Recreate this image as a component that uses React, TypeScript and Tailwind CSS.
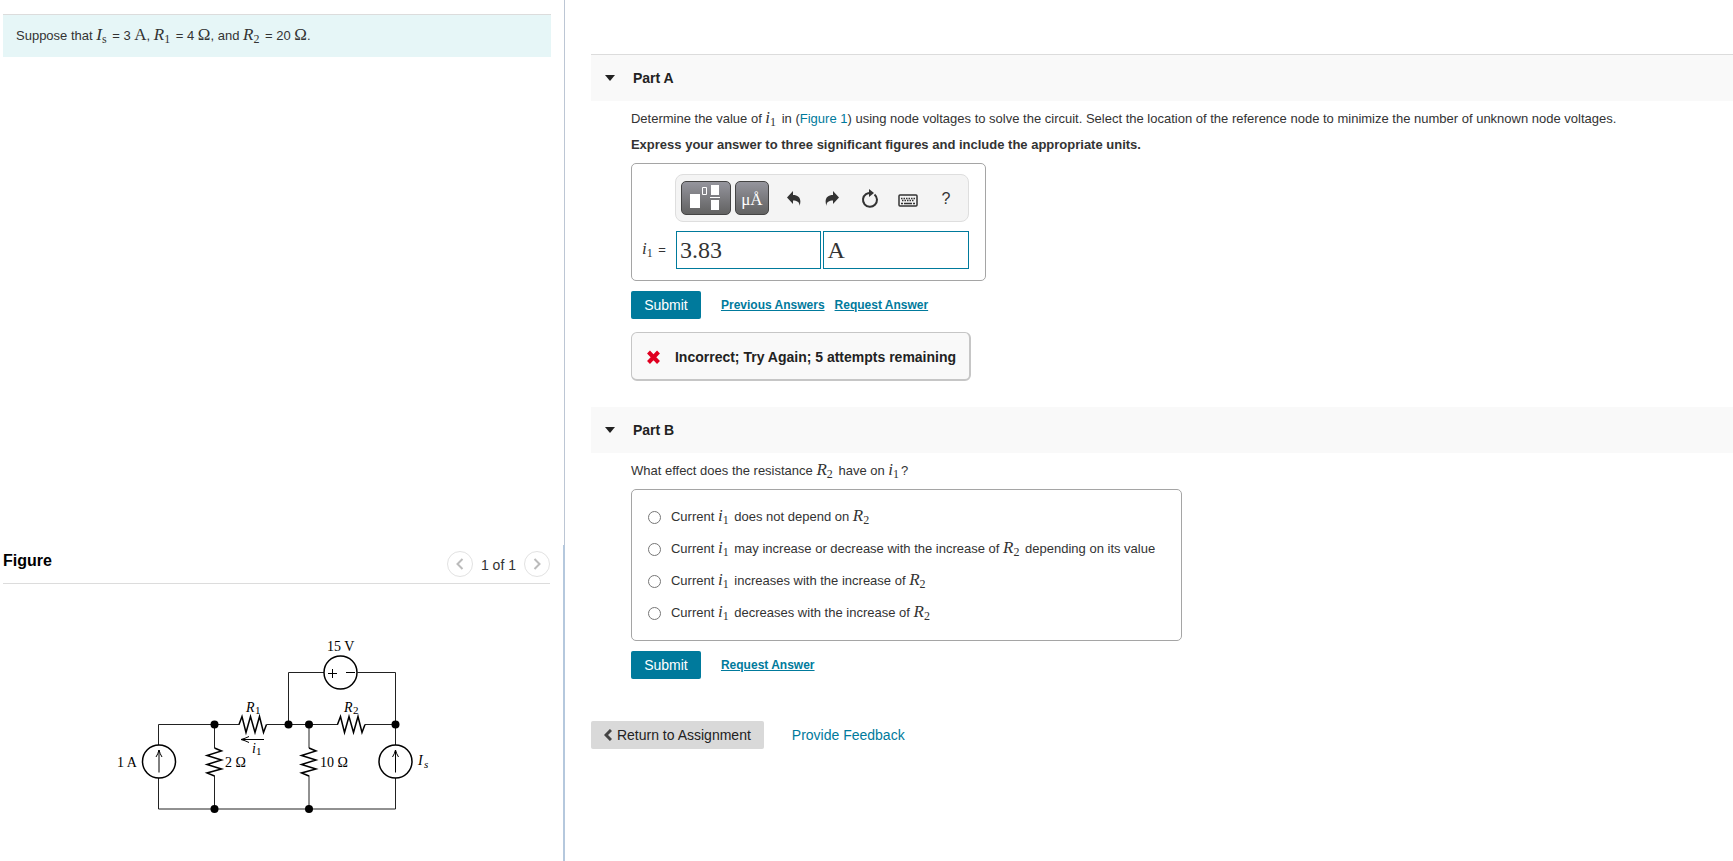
import { useState, type ReactNode } from "react";

const CHOICES: { id: string; text: ReactNode }[] = [
  {
    id: "none",
    text: (
      <>
        Current <Sym name="i" sub="1" /> does not depend on <Sym name="R" sub="2" />
      </>
    ),
  },
  {
    id: "either",
    text: (
      <>
        Current <Sym name="i" sub="1" /> may increase or decrease with the increase of{" "}
        <Sym name="R" sub="2" /> depending on its value
      </>
    ),
  },
  {
    id: "increases",
    text: (
      <>
        Current <Sym name="i" sub="1" /> increases with the increase of <Sym name="R" sub="2" />
      </>
    ),
  },
  {
    id: "decreases",
    text: (
      <>
        Current <Sym name="i" sub="1" /> decreases with the increase of <Sym name="R" sub="2" />
      </>
    ),
  },
];

function Sym({ name, sub }: { name: string; sub: string }) {
  return (
    <span className="mr-0.5 font-['Liberation_Serif',serif] text-[17px] leading-none">
      <i>{name}</i>
      <span className="relative top-[3px] text-xs leading-none">{sub}</span>
    </span>
  );
}

function Unit({ children }: { children: ReactNode }) {
  return (
    <span className="font-['Liberation_Serif',serif] text-[17px] leading-none">{children}</span>
  );
}

function PartHeader({ title, first }: { title: string; first?: boolean }) {
  return (
    <div
      className={
        first
          ? "flex h-[47px] items-center border-t border-[#dcdcdc] bg-[#f9f9f9] pl-3.5"
          : "flex h-[46px] items-center bg-[#f9f9f9] pl-3.5"
      }
    >
      <button type="button" className="flex items-center gap-[18px]">
        <svg width="10" height="6" viewBox="0 0 10 6" aria-hidden="true">
          <path d="M0 0h10L5 6z" fill="#222" />
        </svg>
        <span className="text-sm font-bold text-[#222]">{title}</span>
      </button>
    </div>
  );
}

function SubmitButton() {
  return (
    <button type="button" className="h-7 w-[70px] rounded-xs bg-[#007a9c] text-sm text-white">
      Submit
    </button>
  );
}

function TextLink({ children }: { children: ReactNode }) {
  return (
    <a href="#" className="text-xs font-bold text-[#007a9c] underline">
      {children}
    </a>
  );
}

function ToolButton({ label, children }: { label: string; children: ReactNode }) {
  return (
    <button
      type="button"
      aria-label={label}
      className="flex h-8 w-[38px] items-center justify-center text-base"
    >
      {children}
    </button>
  );
}

function Toolbar() {
  return (
    <div className="flex h-12 items-center gap-1 rounded-lg border border-[#dedede] bg-[#f4f4f4] pl-[5px] text-[#333]">
      <button
        type="button"
        aria-label="Templates"
        className="flex h-[34px] w-[50px] items-center justify-center rounded-[5px] border border-[#444] bg-linear-to-b from-[#95959d] to-[#626262]"
      >
        <svg width="34" height="28" viewBox="0 0 34 28" fill="#fff" aria-hidden="true">
          <path d="M1 10h10v14H1zM22 1h8v10h-8zM22 16h8v10h-8zM21 13h10v1H21z" />
          <path d="M13.5 3.5h4v7h-4z" fill="none" stroke="#fff" />
        </svg>
      </button>
      <button
        type="button"
        aria-label="Units"
        className="h-[34px] w-[34px] rounded-[5px] border border-[#444] bg-linear-to-b from-[#95959d] to-[#626262] pt-0.5 font-['Liberation_Serif',serif] text-[17px] leading-none text-white"
      >
        μÅ
      </button>
      <div className="flex pt-px pl-0.5">
        <ToolButton label="Undo">
          <svg width="14" height="16" viewBox="0 0 14 16" fill="currentColor" aria-hidden="true">
            <path d="M6 0v4c6 0 9 4 6.500 11 .2-4-2.500-5.500-6.500-5.500V13L0 6.500z" />
          </svg>
        </ToolButton>
        <ToolButton label="Redo">
          <svg width="14" height="16" viewBox="0 0 14 16" fill="currentColor" aria-hidden="true">
            <path d="M8 0v4C2 4-1 8 1.500 15c-.2-4 2.500-5.500 6.500-5.500V13l6-6.500z" />
          </svg>
        </ToolButton>
        <ToolButton label="Reset">
          <svg width="18" height="20" viewBox="0 0 18 20" fill="none" aria-hidden="true">
            <path
              d="M13.500 5.500A7 7 0 1 1 5 5.100Q7 4 9.500 4"
              stroke="currentColor"
              strokeWidth="2"
            />
            <path d="M8 0l5 4-5 4z" fill="currentColor" />
          </svg>
        </ToolButton>
        <ToolButton label="Keyboard">
          <svg width="20" height="16" viewBox="0 0 20 16" fill="none" aria-hidden="true">
            <rect x="1" y="4" width="18" height="11" rx="1" stroke="currentColor" strokeWidth="1.500" />
            <path
              d="M3 7.500h14M4 9.500h12"
              stroke="currentColor"
              strokeWidth="1.300"
              strokeDasharray="1.500 1"
            />
            <path d="M3 12.500h2m1 0h8m1 0h2" stroke="currentColor" strokeWidth="1.300" />
          </svg>
        </ToolButton>
        <ToolButton label="Help">?</ToolButton>
      </div>
    </div>
  );
}

function Circuit() {
  return (
    <svg
      width="350"
      height="210"
      viewBox="0 0 350 210"
      fill="none"
      stroke="#000"
      className="font-['Liberation_Serif',serif] text-sm"
      role="img"
      aria-label="Circuit diagram"
    >
      {/* wires */}
      <path
        d="M58.500 125V104.500H139.500M166.500 104.500H238M265 104.500H295.500M114.500 104.500V128M114.500 155.500V189M209 104.500V128M209 155.500V189M188.500 104.500V52.500H224M257.500 52.500H295.500V125M58.500 158V189H295.500V158"
        stroke="#222"
      />
      {/* resistors */}
      <g strokeWidth="1.500">
        <path d="M139 104.500l3-8 4 16 4.500-16 4.500 16 4.500-16 4 16 3-8" />
        <path d="M237.500 104.500l3-8 4 16 4.500-16 4.500 16 4.500-16 4 16 3-8" />
        <path d="M114.500 128l7 3-14.500 4.500 14.500 4.500-14.500 4.500 14.500 4.500-14.500 4 7.500 3" />
        <path d="M209 128l7 3-14.500 4.500 14.500 4.500-14.500 4.500 14.500 4.500-14.500 4 7.500 3" />
      </g>
      {/* sources */}
      <g strokeWidth="1.500">
        <circle cx="59" cy="141.500" r="16.500" />
        <circle cx="295.500" cy="141.500" r="16.500" />
        <circle cx="240.500" cy="52.500" r="16.500" />
      </g>
      <path d="M59 152.500V130M56 137q2-3 3-7 1 4 3 7M295.500 152.500V130M292.500 137q2-3 3-7 1 4 3 7" />
      <path d="M228 53.500h9M232.500 49v9M246 52.500h9" />
      <path d="M164 119.500H141M149 116.500q-4 2-8 3 4 1 8 3" />
      <g fill="#000" stroke="none">
        <circle cx="114.500" cy="104.500" r="4" />
        <circle cx="188.500" cy="104.500" r="4" />
        <circle cx="209" cy="104.500" r="4" />
        <circle cx="295.500" cy="104.500" r="4" />
        <circle cx="114.500" cy="189" r="4" />
        <circle cx="209" cy="189" r="4" />
        <text x="227" y="31">15 V</text>
        <text x="17" y="147">1 A</text>
        <text x="125" y="147">2 Ω</text>
        <text x="220" y="147">10 Ω</text>
        <text x="146" y="92" fontStyle="italic">R</text>
        <text x="155" y="94" fontSize="11">1</text>
        <text x="244" y="92" fontStyle="italic">R</text>
        <text x="253" y="94" fontSize="11">2</text>
        <text x="152" y="133" fontStyle="italic">i</text>
        <text x="156" y="135" fontSize="11">1</text>
        <text x="318" y="145" fontStyle="italic">I</text>
        <text x="324" y="148" fontSize="11" fontStyle="italic">s</text>
      </g>
    </svg>
  );
}

function PagerButton({ label, d }: { label: string; d: string }) {
  return (
    <button
      type="button"
      aria-label={label}
      className="flex size-[26px] items-center justify-center rounded-full border border-[#e2e2e2]"
    >
      <svg width="8" height="12" viewBox="0 0 8 12" fill="none" stroke="#bbb" strokeWidth="2">
        <path d={d} />
      </svg>
    </button>
  );
}

function ProblemPanel() {
  return (
    <aside className="flex w-[32.6%] shrink-0 flex-col">
      <div className="flex-1 border-r border-[#bcc6d4] pt-3.5 pr-[13px] pl-[3px]">
        <p className="h-[43px] border-t border-[#dcdcdc] bg-[#e6f6f7] pt-[11px] pl-[13px] leading-5">
          Suppose that <Sym name="I" sub="s" /> = 3 <Unit>A</Unit>, <Sym name="R" sub="1" /> = 4{" "}
          <Unit>Ω</Unit>, and <Sym name="R" sub="2" /> = 20 <Unit>Ω</Unit>.
        </p>
      </div>
      <section className="h-[316px] border-r-2 border-[#b5c8dd] pr-[13px] pl-[3px]">
        <div className="flex h-[39px] items-center justify-between border-b border-[#dcdcdc]">
          <h2 className="pb-1.5 text-base font-bold text-black">Figure</h2>
          <div className="flex items-center gap-2">
            <PagerButton label="Previous figure" d="M6.500 1l-5 5 5 5" />
            <span className="pt-0.5 text-sm">1 of 1</span>
            <PagerButton label="Next figure" d="M1.500 1l5 5-5 5" />
          </div>
        </div>
        <div className="flex justify-center pt-9 pr-0.5">
          <Circuit />
        </div>
      </section>
    </aside>
  );
}

export default function App() {
  const [value, setValue] = useState("3.83");
  const [units, setUnits] = useState("A");
  const [choice, setChoice] = useState("");

  return (
    <div className="flex min-h-screen bg-white font-['Liberation_Sans',Arial,sans-serif] text-[13px] text-[#333]">
      <ProblemPanel />
      <main className="min-w-0 flex-1 pt-[54px] pl-[26px]">
        <PartHeader title="Part A" first />
        <div className="pt-2 pl-10">
          <p className="leading-5">
            Determine the value of <Sym name="i" sub="1" /> in (
            <a href="#" className="text-[#007a9c]">
              Figure 1
            </a>
            ) using node voltages to solve the circuit. Select the location of the reference node to
            minimize the number of unknown node voltages.
          </p>
          <p className="mt-1.5 leading-5 font-bold">
            Express your answer to three significant figures and include the appropriate units.
          </p>

          <div className="mt-2 h-[118px] w-[355px] rounded-[5px] border border-[#a5a5a5] pt-2.5 pr-4 pl-2.5">
            <div className="pl-[33px]">
              <Toolbar />
            </div>
            <div className="mt-[9px] flex items-center">
              <label htmlFor="value" className="w-[34px] shrink-0">
                <Sym name="i" sub="1" /> =
              </label>
              <div className="flex min-w-0 flex-1 gap-0.5 font-['Liberation_Serif',serif] text-2xl">
                <input
                  id="value"
                  className="h-[38px] min-w-0 flex-1 border border-[#007a9c] pl-[3px]"
                  value={value}
                  onChange={(e) => setValue(e.target.value)}
                />
                <input
                  aria-label="Units"
                  className="h-[38px] min-w-0 flex-1 border border-[#007a9c] pl-[3px]"
                  value={units}
                  onChange={(e) => setUnits(e.target.value)}
                />
              </div>
            </div>
          </div>

          <div className="mt-2.5 flex items-center">
            <SubmitButton />
            <div className="ml-5 flex gap-2.5">
              <TextLink>Previous Answers</TextLink>
              <TextLink>Request Answer</TextLink>
            </div>
          </div>

          <div className="mt-[13px] flex h-[49px] w-[340px] items-center gap-3.5 rounded-md border border-r-2 border-b-2 border-[#c6c6c6] bg-[#f9f9f9] pt-px pl-3.5 text-sm font-bold text-[#222]">
            <svg width="15" height="14" viewBox="0 0 15 14" aria-hidden="true">
              <path d="M2.500 2l10 10.500M12.500 2L2.500 12.500" stroke="#e00020" strokeWidth="4" />
            </svg>
            Incorrect; Try Again; 5 attempts remaining
          </div>
        </div>

        <div className="pt-[26px]">
          <PartHeader title="Part B" />
        </div>
        <div className="pt-2 pl-10">
          <p className="leading-5">
            What effect does the resistance <Sym name="R" sub="2" /> have on{" "}
            <Sym name="i" sub="1" />?
          </p>
          <fieldset className="mt-2 flex h-[152px] w-[551px] flex-col gap-3 rounded-[5px] border border-[#a5a5a5] pt-[17px] pl-4">
            {CHOICES.map((c) => (
              <label key={c.id} className="flex h-5 items-center gap-2.5 leading-5">
                <input
                  type="radio"
                  name="effect"
                  className="size-[13px]"
                  checked={choice === c.id}
                  onChange={() => setChoice(c.id)}
                />
                <span>{c.text}</span>
              </label>
            ))}
          </fieldset>
          <div className="mt-2.5 flex items-center gap-5">
            <SubmitButton />
            <TextLink>Request Answer</TextLink>
          </div>
        </div>

        <div className="mt-[42px] flex items-center gap-7 text-sm">
          <button
            type="button"
            className="flex h-7 items-center gap-[5px] rounded-xs bg-[#d9d9d9] px-[13px] text-[#222]"
          >
            <svg width="8" height="12" viewBox="0 0 8 12" fill="none" stroke="#444" strokeWidth="3">
              <path d="M7 1L2 6l5 5" />
            </svg>
            Return to Assignment
          </button>
          <a href="#" className="text-[#007a9c]">
            Provide Feedback
          </a>
        </div>
      </main>
    </div>
  );
}
